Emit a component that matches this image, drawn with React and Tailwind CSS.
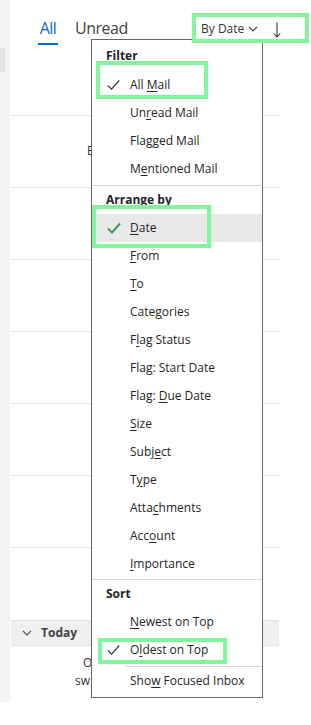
import React from 'react';

const FONT = { fontFamily: '"Open Sans", "Noto Sans", sans-serif' };

const FILTER = [
    ['All ', 'M', 'ail', 'dark'],
    ['Un', 'r', 'ead Mail'],
    ['Fla', 'g', 'ged Mail'],
    ['M', 'e', 'ntioned Mail'],
];
const ARRANGE = [
    ['', 'D', 'ate', 'green'],
    ['', 'F', 'rom'],
    ['', 'T', 'o'],
    ['Cate', 'g', 'ories'],
    ['F', 'l', 'ag Status'],
    ['Fla', 'g', ': Start Date'],
    ['Flag: ', 'D', 'ue Date'],
    ['', 'S', 'ize'],
    ['Subj', 'e', 'ct'],
    ['T', 'y', 'pe'],
    ['Atta', 'c', 'hments'],
    ['Acc', 'o', 'unt'],
    ['', 'I', 'mportance'],
];
const SORT = [
    ['', 'N', 'ewest on Top'],
    ['O', 'l', 'dest on Top', 'dark'],
];

function Check({ green }) {
    return green ? (
        <svg width="14" height="12" viewBox="0 0 14 12" className="absolute left-[15px] top-1/2 -translate-y-1/2">
            <path d="M1 6.5 L5 10.5 L13 1.5" fill="none" stroke="#3f9a58" strokeWidth="2" />
        </svg>
    ) : (
        <svg width="13" height="11" viewBox="0 0 13 11" className="absolute left-[15px] top-1/2 -translate-y-1/2">
            <path d="M0.8 5.8 L4.6 9.6 L12.2 1" fill="none" stroke="#333" strokeWidth="1.2" />
        </svg>
    );
}

function Item({ item, active }) {
    const [a, k, b, check] = item;
    return (
        <div className={`relative h-[28px] flex items-center pl-[38px] text-[12px] text-[#242424] ${active ? 'bg-[#e8e8e8]' : ''}`}>
            {check && <Check green={check === 'green'} />}
            <span>{a}<span className="underline underline-offset-[2px] decoration-[1px]">{k}</span>{b}</span>
        </div>
    );
}

function Head({ children, tall }) {
    return (
        <div className={`${tall ? 'h-[30px]' : 'h-[28px]'} flex items-center pl-[14px] text-[12px] font-bold text-[#242424]`}>{children}</div>
    );
}

function Row({ children }) {
    return <div className="relative h-[72px] border-b border-[#e1e1e1]">{children}</div>;
}

export default function App() {
    return (
        <div className="relative w-[311px] h-[725px] bg-white overflow-hidden" style={FONT}>
            <div className="flex h-[702px]">
                {/* left rail */}
                <div className="w-[10px] bg-[#f3f3f3] pt-[48px]">
                    <div className="w-[5px] h-[24px] bg-[#e3e3e3]" />
                </div>

                {/* mail list */}
                <div className="w-[268px] ml-[1px] flex flex-col">
                    <div className="h-[46px] flex items-start pt-[15px] pl-[27px] gap-[17px] text-[16px] tracking-[-0.5px]">
                        <div className="flex flex-col items-center">
                            <span className="text-[#0f6cbd] leading-[26px]">All</span>
                            <div className="w-[20px] h-[2px] bg-[#0f6cbd] mt-[2px]" />
                        </div>
                        <span className="text-[#424242] leading-[26px]">Unread</span>
                    </div>
                    <div className="h-[70px] border-b border-[#e1e1e1]" />
                    <Row>
                        <span className="absolute left-[76px] top-[26px] text-[12px] text-[#333]">E</span>
                    </Row>
                    <Row />
                    <Row />
                    <Row />
                    <Row />
                    <Row />
                    <div className="h-[72px]" />
                    <div className="h-[26px] bg-[#efefef] border-y border-[#e3e3e3] flex items-center pl-[11px] gap-[9px]">
                        <svg width="10" height="6" viewBox="0 0 10 6"><path d="M1 1 L5 5 L9 1" fill="none" stroke="#555" strokeWidth="1.2" /></svg>
                        <span className="text-[12px] font-bold text-[#424242]">Today</span>
                    </div>
                    <div className="relative flex-1">
                        <span className="absolute left-[72px] top-[8px] text-[12px] text-[#333]">O</span>
                        <span className="absolute left-[64px] top-[26px] text-[12px] text-[#333]">sw</span>
                    </div>
                </div>

                {/* sort control */}
                <div className="absolute left-[201px] top-[20px] flex items-center text-[12px] text-[#333]">
                    <span>By Date</span>
                    <svg width="10" height="6" viewBox="0 0 10 6" className="ml-[4px]"><path d="M1 1 L5 5 L9 1" fill="none" stroke="#444" strokeWidth="1.2" /></svg>
                    <svg width="8" height="16" viewBox="0 0 8 16" className="ml-[15px] mt-[2px]">
                        <path d="M4 0.5 L4 15 M0.8 11.5 L4 15 L7.2 11.5" fill="none" stroke="#333" strokeWidth="1.1" />
                    </svg>
                </div>
            </div>

            {/* dropdown menu */}
            <div className="absolute left-[91px] top-[39px] w-[172px] h-[659px] bg-white border border-[#666] pt-[1px]">
                <Head tall>Filter</Head>
                {FILTER.map(it => <Item key={it.join()} item={it} />)}
                <div className="h-[1px] bg-[#d6d6d6] mt-[2px]" />
                <Head>Arrange by</Head>
                {ARRANGE.map((it, i) => <Item key={it.join()} item={it} active={i === 0} />)}
                <div className="h-[1px] bg-[#d6d6d6] mt-[1px]" />
                <Head>Sort</Head>
                {SORT.map(it => <Item key={it.join()} item={it} />)}
                <div className="h-[1px] bg-[#d6d6d6] ml-[33px] mt-[2px]" />
                <Item item={['Sho', 'w', ' Focused Inbox']} />
            </div>

            {/* highlight boxes */}
            <div className="absolute left-[192px] top-[13px] w-[117px] h-[30px] border-[4px] border-[#80f59c]" />
            <div className="absolute left-[96px] top-[61px] w-[112px] h-[38px] border-[4px] border-[#80f59c]" />
            <div className="absolute left-[92px] top-[205px] w-[119px] h-[43px] border-[4px] border-[#80f59c]" />
            <div className="absolute left-[98px] top-[638px] w-[129px] h-[26px] border-[4px] border-[#80f59c]" />
        </div>
    );
}
